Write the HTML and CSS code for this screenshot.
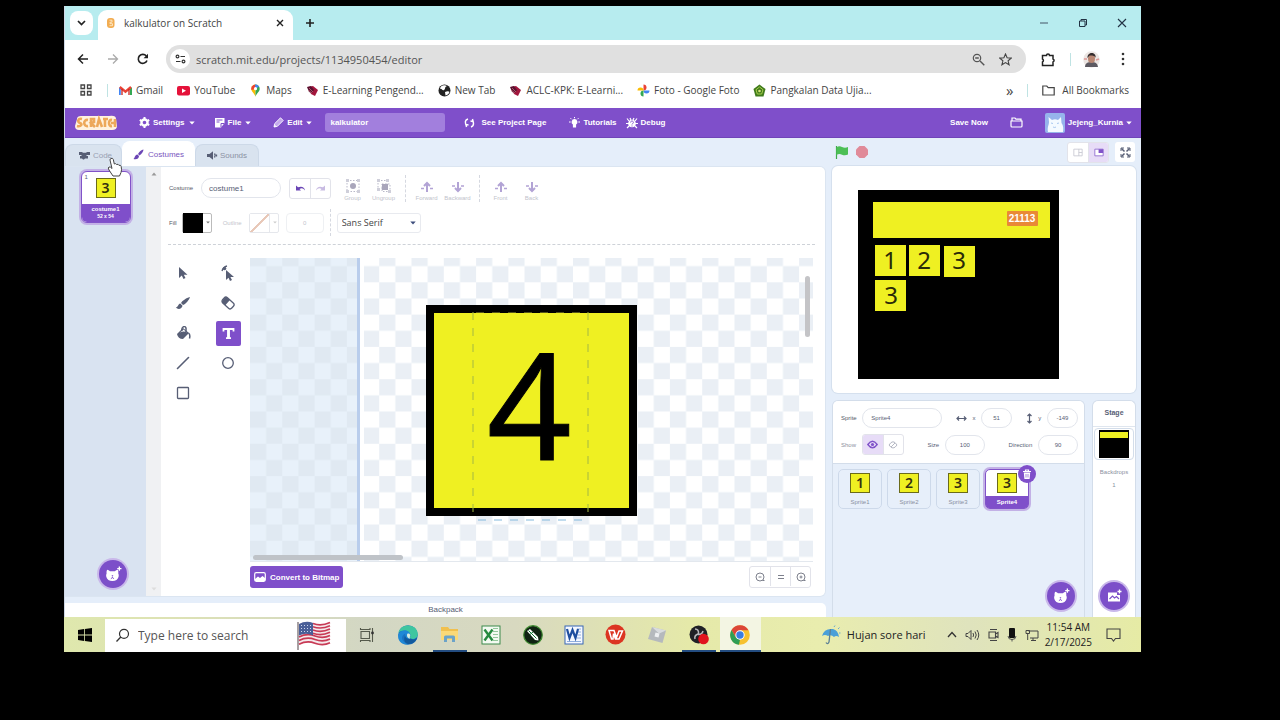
FILE: index.html
```html
<!DOCTYPE html>
<html lang="en">
<head>
<meta charset="utf-8">
<title>kalkulator on Scratch</title>
<link rel="stylesheet" href="styles.css">
</head>
<body>
<svg class="defs" width="0" height="0" aria-hidden="true">
  <symbol id="caret" viewBox="0 0 6 4"><path d="M0.3 0.5h5.4L3 3.6z" fill="currentColor"/></symbol>
  <symbol id="cat" viewBox="0 0 16 16"><path d="M2 3.500c1 0 2 .8 2.700 1.500h4.600C10 4.300 11 3.500 12 3.500c.6 1 .6 2.500.5 3.500.5 1 .6 2 .3 3-.6 2.700-2.800 4-5.800 4s-5.200-1.300-5.800-4c-.3-1-.2-2 .3-3-.1-1-.1-2.500.5-3.500z" fill="#fff"/><path d="M7 8.500l-1 1h2z" fill="#7c4fc9"/><path d="M5.500 12q1.500-.2 1.500-2 0 1.800 1.500 2" fill="none" stroke="#7c4fc9" stroke-width=".7"/><path d="M13.500.5v4M11.500 2.500h4" stroke="#fff" stroke-width="1.300"/></symbol>
  <symbol id="elearn" viewBox="0 0 13 13"><path d="M2 3l5-1 5 4-3 6-4-2z" fill="#a3163d"/><path d="M1 3l4-1 3 4-2 3-3-1z" fill="#5b1030"/><path d="M3 4l4 4M2 6l4 3" stroke="#d8868f" stroke-width=".6"/></symbol>
  <symbol id="up" viewBox="0 0 14 12"><path d="M7 11V2M4 5l3-3 3 3" fill="none" stroke="currentColor" stroke-width="2"/><path d="M1 7.500h3M10 7.500h3" stroke="currentColor" stroke-width="1.300"/></symbol>
  <symbol id="down" viewBox="0 0 14 12"><path d="M7 1v9M4 7l3 3 3-3" fill="none" stroke="currentColor" stroke-width="2"/><path d="M1 5h3M10 5h3" stroke="currentColor" stroke-width="1.300"/></symbol>
</svg>

<div class="window">
  <header class="tabstrip">
    <button class="tab-search" aria-label="Search tabs"><svg width="9" height="6" viewBox="0 0 9 6"><path d="M1 1l3.500 3.500L8 1" fill="none" stroke="#222" stroke-width="1.700"/></svg></button>
    <div class="browser-tab">
      <svg width="10" height="12" viewBox="0 0 10 12"><rect x="1" y="1" width="7.500" height="10" rx="3" fill="#f2ad52"/><path d="M3.500 3.200h2.500v2H4v1.500h2.500v2H3.500" fill="none" stroke="#fff0d8" stroke-width=".8"/></svg>
      <span>kalkulator on Scratch</span>
      <button class="plain" aria-label="Close tab"><svg width="8" height="8" viewBox="0 0 8 8"><path d="M1 1l6 6M7 1L1 7" stroke="#222" stroke-width="1.400"/></svg></button>
    </div>
    <button class="plain newtab" aria-label="New tab"><svg width="10" height="10" viewBox="0 0 10 10"><path d="M5 1v8M1 5h8" stroke="#222" stroke-width="1.600"/></svg></button>
    <div class="win-controls">
      <button class="plain" aria-label="Minimize"><svg width="10" height="10" viewBox="0 0 10 10"><path d="M1 5h8" stroke="#456" stroke-width="1"/></svg></button>
      <button class="plain" aria-label="Restore"><svg width="10" height="10" viewBox="0 0 10 10"><path d="M1.500 3h5.500v5.500H1.500zM3 3V1.500h5.500V7H7" fill="none" stroke="#234" stroke-width="1"/></svg></button>
      <button class="plain" aria-label="Close"><svg width="10" height="10" viewBox="0 0 10 10"><path d="M1 1l8 8M9 1L1 9" stroke="#234" stroke-width="1.100"/></svg></button>
    </div>
  </header>

  <div class="toolbar">
    <button class="plain nav" aria-label="Back"><svg width="12" height="12" viewBox="0 0 12 12"><path d="M11 6H2M6 1.500L1.500 6 6 10.500" fill="none" stroke="#222" stroke-width="1.500"/></svg></button>
    <button class="plain nav" aria-label="Forward"><svg width="12" height="12" viewBox="0 0 12 12"><path d="M1 6h9M6 1.500L10.500 6 6 10.500" fill="none" stroke="#aaa" stroke-width="1.300"/></svg></button>
    <button class="plain nav" aria-label="Reload"><svg width="12" height="12" viewBox="0 0 12 12"><path d="M10 7.500A4.500 4.500 0 1 1 9.300 3" fill="none" stroke="#222" stroke-width="1.600"/><path d="M11 .8v4.400H6.600z" fill="#222"/></svg></button>
    <div class="address">
      <span class="site-info"><svg width="11" height="10" viewBox="0 0 11 10"><g fill="none" stroke="#333" stroke-width="1.200"><circle cx="2.500" cy="2.500" r="1.400"/><path d="M5.500 2.500H10M1 7.500h4.500"/><circle cx="8.500" cy="7.500" r="1.400"/></g></svg></span>
      <input class="url" aria-label="Address" value="scratch.mit.edu/projects/1134950454/editor">
      <svg width="13" height="13" viewBox="0 0 13 13"><circle cx="5" cy="5" r="3.700" fill="none" stroke="#555" stroke-width="1.200"/><path d="M8 8l4.300 4.300M3.200 5h3.600" stroke="#555" stroke-width="1.400"/></svg>
      <svg width="13" height="13" viewBox="0 0 13 13"><path d="M6.500 1l1.600 3.800 4.100.3-3.100 2.700 1 4-3.600-2.200-3.600 2.200 1-4L.8 5.100l4.100-.3z" fill="none" stroke="#444" stroke-width="1.100"/></svg>
    </div>
    <svg class="ext" width="15" height="15" viewBox="0 0 15 15"><path d="M1.500 3.500h4a1.500 1.500 0 0 1 3 0H12v3.500a1.600 1.600 0 0 1 0 3v3.500H1.500V10a1.700 1.700 0 0 0 0-3z" fill="none" stroke="#222" stroke-width="1.500"/></svg>
    <i class="vline"></i>
    <svg class="profile" width="17" height="17" viewBox="0 0 17 17"><circle cx="8.500" cy="8.500" r="8.300" fill="#ece6e3"/><path d="M2 16c0-4 3-5 6.500-5s6 1 6.500 5z" fill="#5d5a62"/><ellipse cx="8.500" cy="7.500" rx="3.500" ry="4.600" fill="#b98773"/><path d="M4.500 7C4 1 13 0 12.800 7 12 4 8 5 6.500 4.500z" fill="#342c2d"/><path d="M1 8h3M13 9l3-1" stroke="#d99" stroke-width="1.500"/></svg>
    <svg class="dots" width="4" height="14" viewBox="0 0 4 14"><circle cx="2" cy="2" r="1.300"/><circle cx="2" cy="7" r="1.300"/><circle cx="2" cy="12" r="1.300"/></svg>
  </div>

  <nav class="bookmarks">
    <svg class="apps" width="12" height="12" viewBox="0 0 12 12"><path d="M1 1h3.500v3.500H1zM7.500 1H11v3.500H7.500zM1 7.500h3.500V11H1zM7.500 7.500H11V11H7.500z" fill="none" stroke="#444" stroke-width="1.300"/></svg>
    <i class="vline"></i>
    <a href="#"><svg width="13" height="13" viewBox="0 0 13 13"><path d="M.8 11V3.500" stroke="#4285f4" stroke-width="2"/><path d="M12 11V3.500" stroke="#34a853" stroke-width="2"/><path d="M.8 3l5.700 4.600L12 3" fill="none" stroke="#ea4335" stroke-width="2.400"/><path d="M3 5v6M10 5v6" stroke="#c5221f" stroke-width="1.300"/></svg>Gmail</a>
    <a href="#"><svg width="13" height="13" viewBox="0 0 13 13"><rect y="2" width="13" height="9.500" rx="2" fill="#e5123a"/><path d="M5 4.500v4.400l4-2.200z" fill="#fff"/></svg>YouTube</a>
    <a href="#"><svg width="13" height="13" viewBox="0 0 13 13"><path d="M6.500 12.800C5.500 9 2.300 8 2.300 4.700A4.200 4.200 0 0 1 6.500.5z" fill="#fbbc04"/><path d="M6.500 12.800c1-3.800 4.200-4.800 4.200-8.100A4.200 4.200 0 0 0 6.500.5z" fill="#34a853"/><path d="M2.500 6A4.200 4.200 0 0 1 6.500.5l1 4z" fill="#ea4335"/><path d="M6 .5a4.200 4.200 0 0 1 4 2L6.500 5z" fill="#4285f4"/><circle cx="6.500" cy="4.700" r="1.600" fill="#fff"/></svg>Maps</a>
    <a href="#"><svg width="13" height="13"><use href="#elearn"/></svg>E-Learning Pengend...</a>
    <a href="#"><svg width="13" height="13" viewBox="0 0 13 13"><circle cx="6.500" cy="6.500" r="6" fill="#222"/><path d="M2 5c2-1 2 2 4 1s0-3 3-4c-3-2-7 0-7 3zM7 8c2-1 4-1 4.500 0-.5 2-2 3-4 3.500z" fill="#fff"/></svg>New Tab</a>
    <a href="#"><svg width="13" height="13"><use href="#elearn"/></svg>ACLC-KPK: E-Learni...</a>
    <a href="#"><svg width="13" height="13" viewBox="0 0 13 13"><path d="M6.500 6.500V.5a3 3 0 0 1 0 6z" fill="#ea4335"/><path d="M6.500 6.500h6a3 3 0 0 1-6 0z" fill="#4285f4"/><path d="M6.500 6.500v6a3 3 0 0 1 0-6z" fill="#34a853"/><path d="M6.500 6.500h-6a3 3 0 0 1 6 0z" fill="#fbbc04"/></svg>Foto - Google Foto</a>
    <a href="#"><svg width="13" height="13" viewBox="0 0 13 13"><path d="M6.500.5l6 4.600-2 7.400h-8l-2-7.400z" fill="#3f7a1c"/><path d="M6.500 3l3.500 2.700-1.300 4.300H4.300L3 5.700z" fill="none" stroke="#a9cf4b"/><circle cx="6.500" cy="7" r="1.300" fill="#d8e27a"/></svg>Pangkalan Data Ujia...</a>
    <span class="more">»</span>
    <i class="vline"></i>
    <a href="#" class="all"><svg width="13" height="11" viewBox="0 0 13 11"><path d="M.8 1h4l1.400 1.600h6V10H.8z" fill="none" stroke="#444" stroke-width="1.200"/></svg>All Bookmarks</a>
  </nav>

  <div class="menubar">
    <svg class="logo" width="44" height="18" viewBox="0 0 44 18"><path d="M3 5q0-3 4-3h28q7-1 7 3l1 7q0 4-5 4H5q-4 0-4-4z" fill="#fff2df"/><g fill="none" stroke="#eda85a" stroke-width="2.600"><path d="M8 5c-4-1-5 3-2 4s1 4-3 3M14 6c-5-1-5 7 0 6M17 13V5h3v3l-3 1 4 4M23 13l2-8 3 8M29 5h5M31 5v8M38 6c-4-1-4 7 0 6M37 9h4"/><path d="M41 5v8"/></g></svg>
    <button class="menu m-settings"><svg width="11" height="11" viewBox="0 0 11 11"><circle cx="5.500" cy="5.500" r="3" fill="none" stroke="#fff" stroke-width="2.400"/><path d="M5.500 0v2M5.500 9v2M.8 2.800l1.600 1M8.600 7.200l1.600 1M.8 8.200l1.600-1M8.600 3.800l1.600-1" stroke="#fff" stroke-width="2"/></svg>Settings<svg class="car" width="6" height="4"><use href="#caret"/></svg></button>
    <button class="menu m-file"><svg width="11" height="11" viewBox="0 0 11 11"><path d="M1 1h9.500v5L7 10.500H1z" fill="#fff"/><path d="M2.500 3h6M2.500 5h3M7 10V6.500h3" stroke="#7d4dcb" stroke-width="1"  fill="none"/></svg>File<svg class="car" width="6" height="4"><use href="#caret"/></svg></button>
    <button class="menu m-edit"><svg width="11" height="11" viewBox="0 0 11 11"><path d="M1 10l.6-3.300L7.500.8l2.700 2.700-5.900 5.900z" fill="#c3a8ec" stroke="#fff" stroke-width=".9"/><path d="M1 10l.6-2.500L3.500 9.400z" fill="#fff"/></svg>Edit<svg class="car" width="6" height="4"><use href="#caret"/></svg></button>
    <input class="title" aria-label="Project title" value="kalkulator">
    <button class="menu m-page"><svg width="11" height="10" viewBox="0 0 11 10"><path d="M4 1C1 2 1 4 2 7M2.500 9l-.5-2.500L4.500 7M7 9c3-1 3-3 2-6M8.500 1l.5 2.500L6.500 3" fill="none" stroke="#fff" stroke-width="1.400"/></svg>See Project Page</button>
    <button class="menu m-tut"><svg width="11" height="12" viewBox="0 0 11 12"><path d="M5.500 2a3 3 0 0 1 1.600 5.500v3H3.900v-3A3 3 0 0 1 5.500 2z" fill="#fff"/><path d="M5.500 0v1.200M0 5h1.700M9.300 5H11M1.500 1.200l1 1M9.500 1.200l-1 1" stroke="#fff"/></svg>Tutorials</button>
    <button class="menu m-debug"><svg width="12" height="12" viewBox="0 0 12 12"><circle cx="6" cy="6.500" r="3.800" fill="#fff"/><path d="M1 1.500l2 2.500M11 1.500L9 4M0 6.500h12M1 11l2-2M11 11L9 9M4 1l1 2M8 1L7 3" stroke="#fff" stroke-width="1.200"/><path d="M4.600 5.500c0-2 2.800-2 2.800 0 0 1-1.400 1-1.400 2M6 8.500v1" fill="none" stroke="#7d4dcb" stroke-width=".9"/></svg>Debug</button>
    <button class="menu m-save">Save Now</button>
    <svg class="folder" width="13" height="11" viewBox="0 0 13 11"><path d="M1 4V9q0 1 1 1h9q1 0 1-1V4zM2 3.500V1h3l1 1.200h5v1.300" fill="none" stroke="#fff" stroke-width="1.200"/></svg>
    <svg class="avatar" width="20" height="20" viewBox="0 0 20 20"><rect width="20" height="20" rx="2" fill="#96b4ec"/><path d="M3 19C2 14 4 12 4 9l-.500-5L7 7q3-1.500 6 0l3-3 .500 6c2 3 2 5 1.500 9z" fill="#f4faff"/><path d="M6 10l2 .5M12 10.500l2-.5M8 14q2 1 3 0" stroke="#a9c8f0" fill="none"/></svg>
    <button class="menu m-user">Jejeng_Kurnia<svg class="car" width="6" height="4"><use href="#caret"/></svg></button>
  </div>

  <main class="editor">
    <section class="left">
      <div class="tabs" role="tablist">
        <button class="etab code" role="tab"><svg width="11" height="9" viewBox="0 0 11 9"><path d="M0 1h3l1 .8h3L8 1h3v3H8l-1 1H3L2 4H0zM1 5h8v2.500H6l-1 1H4l-1-1H1z" fill="#575e75"/></svg>Code</button>
        <button class="etab active" role="tab" aria-selected="true"><svg width="11" height="11" viewBox="0 0 11 11"><path d="M10.500.5c-2 0-4.500 2.500-5.500 4.500L6.500 6.500C8.500 5 10.500 2.500 10.500.5z" fill="#6b45b5"/><path d="M4.500 5.500L6 7c0 2.500-2.500 4-5.500 3C2 9 1.500 6 4.500 5.500z" fill="#6b45b5"/></svg>Costumes</button>
        <button class="etab sounds" role="tab"><svg width="11" height="9" viewBox="0 0 11 9"><path d="M0 3h2.500L6 .3v8.400L2.500 6H0z" fill="#575e75"/><path d="M7.500 2.500q1.500 2 0 4M9.500 3.500v2" fill="none" stroke="#575e75" stroke-width="1.300"/></svg>Sounds</button>
      </div>
      <div class="pane">
        <div class="selector">
          <div class="costume">
            <span class="num">1</span><div class="card-art"><b class="thumb">3</b></div>
            <div class="card-name">costume1<small>52 x 54</small></div>
          </div>
          <button class="round add-costume" aria-label="Choose a costume"><svg width="17" height="17"><use href="#cat"/></svg></button>
        </div>
        <div class="scroll"><svg width="6" height="4" viewBox="0 0 6 4"><path d="M.5 3.500h5L3 .5z" fill="#999"/></svg><i></i><svg width="6" height="4" viewBox="0 0 6 4"><path d="M.5.5h5L3 3.500z" fill="#ddd"/></svg></div>
        <div class="paint">
          <div class="row r1">
            <label for="cname" class="dark">Costume</label>
            <input id="cname" class="pill cname" value="costume1">
            <div class="pair undo"><button aria-label="Undo"><svg width="11" height="8" viewBox="0 0 11 8"><path d="M1 1.500v5h5L4.500 5Q7.500 3 10 6.500 9 1.500 3 3.300z" fill="#6a45b5"/></svg></button><button aria-label="Redo"><svg width="11" height="8" viewBox="0 0 11 8"><path d="M10 1.500v5H5L6.500 5Q3.500 3 1 6.500 2 1.500 8 3.300z" fill="#c8bbe2"/></svg></button></div>
            <button class="act grp"><svg width="16" height="14" viewBox="0 0 16 14"><path d="M2 1.500h12v11H2z" fill="none" stroke="#b9b9c9" stroke-dasharray="1.500 1.500"/><path d="M1 0h3v3H1zM12 0h3v3h-3zM1 11h3v3H1zM12 11h3v3h-3z" fill="#cfcfda"/><circle cx="8" cy="7" r="3" fill="#a9a6bb"/></svg>Group</button>
            <button class="act ungrp"><svg width="16" height="14" viewBox="0 0 16 14"><path d="M2 1.500h9v8H2zM6 5h8v7.500H6z" fill="none" stroke="#b9b9c9" stroke-dasharray="1.500 1.500"/><path d="M1 0h3v3H1zM10 0h3v3h-3zM1 9h3v3H1zM12 11h3v3h-3z" fill="#cfcfda"/><rect x="6" y="5" width="6" height="6" fill="#a9a6bb"/></svg>Ungroup</button>
            <i class="dot wide"></i>
            <button class="act fwd"><svg width="14" height="12"><use href="#up"/></svg>Forward</button>
            <button class="act bwd"><svg width="14" height="12"><use href="#down"/></svg>Backward</button>
            <i class="dot wide"></i>
            <button class="act frt"><svg width="14" height="12"><use href="#up"/></svg>Front</button>
            <button class="act bck"><svg width="14" height="12"><use href="#down"/></svg>Back</button>
          </div>
          <div class="row r2">
            <span class="dark">Fill</span>
            <button class="swatch fill" aria-label="Fill colour"><i></i><svg width="4" height="3"><use href="#caret"/></svg></button>
            <span class="muted outl">Outline</span>
            <button class="swatch none" aria-label="Outline colour"><i></i><svg width="4" height="3"><use href="#caret"/></svg></button>
            <input class="owidth" aria-label="Outline width" value="0">
            <i class="dot"></i>
            <div class="fontbox"><select aria-label="Font"><option>Sans Serif</option></select><svg width="6" height="4"><use href="#caret"/></svg></div>
          </div>
          <div class="work">
            <div class="tools">
              <button aria-label="Select"><svg width="14" height="14" viewBox="0 0 14 14"><path d="M3 1v11l2.800-2.500 1.700 3.600 2-1-1.700-3.400H11.500z" fill="#575e75"/></svg></button>
              <button aria-label="Reshape"><svg width="15" height="17" viewBox="0 0 15 17"><path d="M5 5v10l2.500-2.300 1.500 3.300 2-1-1.600-3H13z" fill="#575e75"/><path d="M1 6Q2 2 6 1" fill="none" stroke="#575e75" stroke-width="1.300"/><circle cx="3.500" cy="3.500" r="1.800" fill="#575e75"/></svg></button>
              <button aria-label="Brush"><svg width="16" height="14" viewBox="0 0 16 14"><path d="M15 1C11 2 7 5 6 7l2 2c3-1 6-5 7-8z" fill="#575e75"/><path d="M5.300 7.500l2.200 2.200C7 13 3 14 .8 11.500 3 11.500 3 8 5.300 7.500z" fill="#575e75"/></svg></button>
              <button aria-label="Eraser"><svg width="14" height="14" viewBox="0 0 14 14"><g transform="rotate(42 7 7)"><rect x=".8" y="3.500" width="12.400" height="7" rx="2.300" fill="#fff" stroke="#575e75" stroke-width="1.300"/><path d="M2.500 3.500h4v7h-4q-1.500 0-1.500-3.500t1.500-3.500z" fill="#575e75"/></g></svg></button>
              <button aria-label="Fill"><svg width="15" height="14" viewBox="0 0 15 14"><path d="M1 8l6-6 6 5-6 6Q2 13 1 8z" fill="#575e75"/><path d="M4 6.500q4-2 7 0L7.500 3.500z" fill="#fff"/><path d="M6 5c-1-4 3-6 4-3v4M12.500 7c1.500 1 1.500 3.500 1 5.500" fill="none" stroke="#575e75" stroke-width="1.500"/></svg></button>
              <button class="on" aria-label="Text" aria-pressed="true"><svg width="15" height="15" viewBox="0 0 15 15"><path d="M2.500 5.500V3h10v2.500M7.500 3v9.200M5 12.200h5" fill="none" stroke="#fff" stroke-width="1.800"/><path d="M7.500 3v9" stroke="#fff" stroke-width="2.800"/></svg></button>
              <button aria-label="Line"><svg width="14" height="14" viewBox="0 0 14 14"><path d="M1.500 12.500l11-11" stroke="#575e75" stroke-width="1.600" stroke-linecap="round"/></svg></button>
              <button aria-label="Circle"><svg width="14" height="14" viewBox="0 0 14 14"><circle cx="7" cy="7" r="5.300" fill="none" stroke="#575e75" stroke-width="1.300"/></svg></button>
              <button aria-label="Rectangle"><svg width="14" height="14" viewBox="0 0 14 14"><rect x="1.500" y="1.500" width="11" height="11" rx=".8" fill="none" stroke="#575e75" stroke-width="1.300"/></svg></button>
            </div>
            <div class="canvas-col">
              <svg class="canvas" viewBox="0 0 563 303" preserveAspectRatio="xMinYMin slice">
                <defs>
                  <pattern id="chk" x="0" y="-8" width="32.300" height="32.300" patternUnits="userSpaceOnUse"><path d="M0 0h16.150v16.150H0zM16.150 16.150H32.300V32.300H16.150z" fill="#eaeff5"/></pattern>
                  <pattern id="chk2" x="0" y="-8" width="32.300" height="32.300" patternUnits="userSpaceOnUse"><path d="M0 0h16.150v16.150H0zM16.150 16.150H32.300V32.300H16.150z" fill="#e0e9f2"/></pattern>
                </defs>
                <rect width="563" height="303" fill="#fff"/>
                <rect x="114" width="449" height="303" fill="url(#chk)"/>
                <rect width="108" height="303" fill="#e8f1fa"/>
                <rect width="108" height="303" fill="url(#chk2)"/>
                <rect x="107" width="3" height="303" fill="#b9cdec"/>
                <rect x="180" y="51" width="203" height="203" fill="#eff022" stroke="#000" stroke-width="8"/>
                <text x="237" y="202" class="big">4</text>
                <path d="M223 54V262M338 54V262" stroke="#a3b845" stroke-width="1" stroke-dasharray="8 8" fill="none"/>
                <path d="M226 54.500H337" stroke="#55551c" stroke-width="1" stroke-dasharray="8 8"/>
                <path d="M228 262H337" stroke="#83b9dd" stroke-width="1" stroke-dasharray="8 8"/>
                <rect x="555" y="18" width="5" height="61" rx="2.500" fill="#c4c4c7"/>
                <rect x="3" y="297" width="150" height="5" rx="2.500" fill="#bfc3c8"/>
              </svg>
              <div class="canvas-foot">
                <button class="convert"><svg width="12" height="10" viewBox="0 0 12 10"><rect x=".7" y=".7" width="10.600" height="8.600" rx="1.500" fill="none" stroke="#fff" stroke-width="1.200"/><path d="M1 7l3-2.500 2 1.500 2.500-2L11 6v3H1z" fill="#fff"/></svg>Convert to Bitmap</button>
                <div class="pair zoomers">
                  <button aria-label="Zoom out"><svg width="12" height="12" viewBox="0 0 12 12"><circle cx="6" cy="6" r="4" fill="none" stroke="#7d808c"/><path d="M8.500 9.500H10.500M4.500 6h3" stroke="#7d808c"/></svg></button>
                  <button aria-label="Zoom reset"><svg width="8" height="8" viewBox="0 0 8 8"><path d="M1 2.500h6M1 5.500h6" stroke="#7d808c"/></svg></button>
                  <button aria-label="Zoom in"><svg width="12" height="12" viewBox="0 0 12 12"><circle cx="6" cy="6" r="4" fill="none" stroke="#7d808c"/><path d="M8.500 9.500H10.500M4.500 6h3M6 4.500v3" stroke="#7d808c"/></svg></button>
                </div>
              </div>
            </div>
          </div>
        </div>
      </div>
      <div class="backpack">Backpack</div>
    </section>

    <section class="right">
      <div class="stage-head">
        <button class="plain" aria-label="Go"><svg width="14" height="14" viewBox="0 0 14 14"><path d="M1.500 1v13" stroke="#3fa94a" stroke-width="1.200"/><path d="M1.500 2.500Q4 .5 7 2t6 0v7.500q-3 1.500-6 .2t-5.500.3z" fill="#4cbf56"/></svg></button>
        <button class="plain" aria-label="Stop"><svg width="14" height="14" viewBox="0 0 14 14"><path d="M4.500 1h5L13 4.500v5L9.500 13h-5L1 9.500v-5z" fill="#e08a99"/></svg></button>
        <div class="pair sizes"><button aria-label="Small stage"><svg width="10" height="9" viewBox="0 0 12 10"><path d="M1 1h10v8H1zM7 1v8M7 5h4" fill="none" stroke="#c5c7d0"/></svg></button><button class="sel" aria-label="Large stage"><svg width="10" height="9" viewBox="0 0 12 10"><path d="M1 1h10v8H1z" fill="#fff" stroke="#8a65cc"/><path d="M5.500 1H11v4.500H5.500z" fill="#8153c9"/></svg></button></div>
        <button class="full" aria-label="Full screen"><svg width="11" height="11" viewBox="0 0 11 11"><path d="M1 4V1h3M7 1h3v3M10 7v3H7M4 10H1V7" fill="none" stroke="#575e75" stroke-width="1"/><path d="M1.500 1.500l3 3M9.500 1.500l-3 3M9.500 9.500l-3-3M1.500 9.500l3-3" fill="none" stroke="#575e75" stroke-width="1.500"/></svg></button>
      </div>
      <svg class="stage" viewBox="0 0 304 227" preserveAspectRatio="xMinYMin meet">
        <rect x="26" y="24" width="201" height="189"/>
        <g fill="#eff022"><rect x="41" y="36" width="177" height="36"/><rect x="43" y="79" width="31" height="31"/><rect x="77" y="79" width="31" height="31"/><rect x="112" y="80" width="31" height="31"/><rect x="43" y="114" width="31" height="31"/></g>
        <rect x="175" y="45" width="31" height="15" rx="1" fill="#e98936"/>
        <text x="190" y="56" class="monitor">21113</text>
        <g class="dig"><text x="58" y="103">1</text><text x="92" y="103">2</text><text x="127" y="103">3</text><text x="59" y="138">3</text></g>
      </svg>
      <div class="lower">
        <div class="sprites">
          <div class="info">
            <div class="irow">
              <label for="sname" class="dark">Sprite</label><input id="sname" class="pill sname" value="Sprite4">
              <svg class="ax" width="11" height="7" viewBox="0 0 11 7"><path d="M1 3.500h9M3 1.500L1 3.500l2 2M8 1.500l2 2-2 2" fill="none" stroke="#575e75" stroke-width="1.200"/></svg>
              <label for="px">x</label><input id="px" class="pill num30" value="51">
              <svg class="ay" width="7" height="11" viewBox="0 0 7 11"><path d="M3.500 1v9M1.500 3l2-2 2 2M1.500 8l2 2 2-2" fill="none" stroke="#575e75" stroke-width="1.200"/></svg>
              <label for="py">y</label><input id="py" class="pill num30" value="-149">
            </div>
            <div class="irow">
              <span class="muted2">Show</span>
              <div class="pair show"><button class="sel" aria-label="Show"><svg width="11" height="9" viewBox="0 0 11 9"><path d="M.8 4.500Q5.500-2 10.200 4.500 5.500 11 .8 4.500z" fill="none" stroke="#8153c9" stroke-width="1.300"/><circle cx="5.500" cy="4.500" r="1.600" fill="#8153c9"/></svg></button><button aria-label="Hide"><svg width="10" height="10" viewBox="0 0 10 10"><path d="M1 5Q5-1.500 9 5 5 11 1 5zM7 3L3 7" fill="none" stroke="#b5b8c4"/></svg></button></div>
              <label for="sz" class="l-size">Size</label><input id="sz" class="pill num40" value="100">
              <label for="dr" class="l-dir">Direction</label><input id="dr" class="pill num40" value="90">
            </div>
          </div>
          <div class="tiles">
            <div class="tile"><b class="thumb">1</b><span>Sprite1</span></div>
            <div class="tile"><b class="thumb">2</b><span>Sprite2</span></div>
            <div class="tile"><b class="thumb">3</b><span>Sprite3</span></div>
            <div class="tile chosen"><b class="thumb">3</b><span>Sprite4</span>
              <button class="trash" aria-label="Delete"><svg width="10" height="11" viewBox="0 0 10 11"><path d="M1 2.500h8M3.500 2V1h3v1" stroke="#fff" stroke-width="1.200" fill="none"/><path d="M1.800 3.500h6.400L7.600 10H2.400z" fill="#fff"/><path d="M4 5v3.500M6 5v3.500" stroke="#8153c9" stroke-width=".7"/></svg></button>
            </div>
          </div>
          <button class="round add-sprite" aria-label="Choose a sprite"><svg width="17" height="17"><use href="#cat"/></svg></button>
        </div>
        <div class="stage-sel">
          <div class="sh">Stage</div>
          <div class="bd"><i></i></div>
          <div class="bl">Backdrops</div><div class="bl">1</div>
          <button class="round add-bd" aria-label="Choose a backdrop"><svg width="16" height="16" viewBox="0 0 16 16"><path d="M2 4.500h9V7h3v6.500H2z" fill="#fff"/><path d="M3.500 11l3-3 2 2 2-1.500L13 11" fill="none" stroke="#7c4fc9" stroke-width="1.200"/><path d="M13.500 1.500v4M11.500 3.500h4" stroke="#fff" stroke-width="1.300"/></svg></button>
        </div>
      </div>
    </section>
  </main>

  <footer class="taskbar">
    <button class="start" aria-label="Start"><svg width="14" height="14" viewBox="0 0 14 14"><path d="M0 2l6-.9v5.500H0zM6.800 1L14 0v6.600H6.800zM0 7.400h6v5.500L0 12zM6.800 7.400H14V14l-7.200-1z"/></svg></button>
    <div class="search">
      <svg width="15" height="15" viewBox="0 0 15 15"><circle cx="9" cy="5.800" r="4.500" fill="none" stroke="#333" stroke-width="1.200"/><path d="M5.800 9L1.500 13.500" stroke="#333" stroke-width="1.300"/></svg>
      <input aria-label="Search" placeholder="Type here to search">
      <svg width="35" height="30" viewBox="0 0 35 30"><path d="M2 2v28" stroke="#8a8085" stroke-width="1.500"/><path d="M3 4Q10 0 18 3t16-1v21q-8 4-16 1T3 25z" fill="#f5e9ec"/><g fill="none" stroke="#c83a55" stroke-width="1.700"><path d="M17 3.500q8 3 17-1M17 6.700q8 3 17-1M17 10q8 3 17-1M17 13.300q8 3 17-1"/><path d="M3 17q8-4 16-1t15-.5M3 20.500q8-4 16-1t15-.5M3 24.200q8-4 16-1t15-.5"/></g><path d="M3 4Q10 0 17 3v12.500Q10 12 3 15.500z" fill="#4a5f98"/><path d="M5 5.500h11M5 8.500h11M5 11.500h11" stroke="#cdd6ee" stroke-width="1" stroke-dasharray="1 2"/></svg>
    </div>
    <div class="apps-row">
      <button aria-label="Task View"><svg width="16" height="16" viewBox="0 0 16 16"><path d="M2 4.500h8.500v7H2zM1.500 1v1.500H11V1M1.500 15v-1.500H11V15M13.500 1v14" fill="none" stroke="#555a4c" stroke-width="1.100"/><circle cx="13.500" cy="6" r="1.400" fill="#333"/></svg></button>
      <button aria-label="Edge"><svg width="20" height="20" viewBox="0 0 20 20"><circle cx="10" cy="10" r="9.800" fill="#1a73c2"/><path d="M.5 8C2-2 19-2 19.800 9c0 4-4 6-7.500 4.500-1-.5 0-1.500 0-3C12 5 4 4 .5 8z" fill="#3ec6a0"/><path d="M.5 9C4 3 13 5 12.300 11c-.3 1-1 1.500 0 2.500-4 1-6-2-5-5-6 3-3 9 3 11C3 20-1 15 .5 9z" fill="#2088d6"/><path d="M12 13.600c3 1.600 6 .5 7.200-1-1 4-5 7-9 6.400-4-1-5-5-3-8.500 0 2 2 4 4.800 3.100z" fill="#125a9e"/><path d="M9 10c0-2 3-2 3.300.5-.3 1-1 2 0 3C9.500 13.500 9 11.500 9 10z" fill="#d7ecdf"/></svg></button>
      <button class="run" aria-label="File Explorer"><svg width="19" height="17" viewBox="0 0 19 17"><path d="M1 1h7l1.500 2H18v11H1z" fill="#f1c04e"/><path d="M1 5h17v9H1z" fill="#fbd977"/><path d="M4 16v-5q0-1.500 1.500-1.500h8Q15 9.500 15 11v5h-3v-3.500H7V16z" fill="#6ba3c9"/></svg></button>
      <button aria-label="Excel"><svg width="20" height="20" viewBox="0 0 20 20"><rect x="1" y="1" width="18" height="18" fill="#f4faf2" stroke="#3c8a4c"/><path d="M12 3.500h5M12 6.500h5M12 9.500h5M12 12.500h5M12 15.500h5" stroke="#93c79b"/><path d="M3.500 4.500l8 11M11.500 4.500l-8 11" stroke="#258a3f" stroke-width="2.400"/></svg></button>
      <button aria-label="CorelDRAW"><svg width="20" height="20" viewBox="0 0 20 20"><circle cx="10" cy="10" r="9.300" fill="#102313" stroke="#418c33" stroke-width="1.200"/><path d="M4 6l3-2 8 8 .5 3.500L12 15z" fill="#fff"/><path d="M5.500 5.500l8 8M7 9.500l3-2.500" stroke="#173"/></svg></button>
      <button aria-label="Word"><svg width="20" height="20" viewBox="0 0 20 20"><rect x="1" y="1" width="18" height="18" fill="#f5f8ff" stroke="#3867b5"/><path d="M13 4h4M14 7h3M14 10h3M13 13h4M3 16.500h14" stroke="#90aede"/><path d="M3 4l2.500 9L8.500 5l3 8L14 4" fill="none" stroke="#1e4e9f" stroke-width="2.200"/></svg></button>
      <button aria-label="WPS Office"><svg width="21" height="21" viewBox="0 0 21 21"><circle cx="10.500" cy="10.500" r="10" fill="#dc3522"/><path d="M4 6.500h5l2.500 7L14 7h3.500L14 15h-3.500L8.500 9.500 8 15H6.500z" fill="none" stroke="#fff" stroke-width="1.500"/></svg></button>
      <button aria-label="Roblox"><svg width="20" height="18" viewBox="0 0 20 18"><path d="M5 1l14 3.500-3.500 12.500L1 13z" fill="#b5b9bd"/><path d="M5 1l14 3.500-7 3z" fill="#d9dcdf"/><path d="M8.500 6.500l4 1-1 4-4-1z" fill="#eef0f2"/></svg></button>
      <button class="run" aria-label="OBS Studio"><svg width="20" height="20" viewBox="0 0 20 20"><circle cx="9.500" cy="9.500" r="9" fill="#202126"/><path d="M6 4q4 0 3.500 5M14 6q-1 4-5 3.500M6 14q-1-3.500 3-5" fill="none" stroke="#b8b8bd" stroke-width="1.500"/><circle cx="14.500" cy="14" r="5.300" fill="#e0121d"/></svg></button>
      <button class="run open" aria-label="Chrome"><svg width="20" height="20" viewBox="0 0 20 20"><circle cx="10" cy="10" r="9.800" fill="#f6c12f"/><path d="M1.500 5A9.800 9.800 0 0 1 18.500 5.300H10L6 12.500z" fill="#dc4638"/><path d="M1.500 5l4.400 7.600L10 14.800l-1 5A9.800 9.800 0 0 1 1.500 5z" fill="#2f9e55"/><circle cx="10" cy="10" r="4.700" fill="#fff"/><circle cx="10" cy="10" r="3.700" fill="#3b7de0"/></svg></button>
    </div>
    <div class="weather"><svg width="20" height="20" viewBox="0 0 20 20"><path d="M1 11Q3 3 12 4q5 1 6 8-3-2-5 0-3-3-6-1-3-2-6 0z" fill="#4a9fd8"/><path d="M9.500 4L8 17q-1.500 3-3 .5" fill="none" stroke="#5b7f95" stroke-width="1.300"/><path d="M13 2l1-1.500M17 4l1.500-1.500M18 8h1.500" stroke="#6aa7d0"/></svg>Hujan sore hari</div>
    <div class="tray">
      <svg width="10" height="7" viewBox="0 0 10 7"><path d="M1 6l4-4.500L9 6" fill="none" stroke="#333" stroke-width="1.300"/></svg>
      <svg width="15" height="12" viewBox="0 0 15 12"><path d="M1 4.500h2L6 1.500v9L3 7.500H1zM8 4q1.200 2 0 4M10 2.500q2.500 3.500 0 7M12 1q3.500 5 0 10" fill="none" stroke="#444"/></svg>
      <svg width="11" height="14" viewBox="0 0 11 14"><path d="M1 4h6.500v6H1zM7.500 6l2.500-1.500v5L7.500 8M2 1.500h7M2 12.500h7" fill="none" stroke="#444" stroke-width="1.100"/></svg>
      <svg width="10" height="14" viewBox="0 0 10 14"><rect x="2" y="0" width="6" height="10" rx="1" fill="#111"/><path d="M1 8q0 3.500 4 3.500T9 8M5 11v2.500" fill="none" stroke="#555"/></svg>
      <svg width="14" height="12" viewBox="0 0 14 12"><path d="M3.500 2H13v7H5M8 9v2.500M6 11.500h5M1 1.500h3.500v3H1zM2.700 4.500V11" fill="none" stroke="#444"/></svg>
    </div>
    <div class="clock"><span>11:54 AM</span><span>2/17/2025</span></div>
    <svg class="notif" width="15" height="14" viewBox="0 0 15 14"><path d="M1 1h13v9.500H9.500L7.500 13l-2-2.500H1z" fill="none" stroke="#444" stroke-width="1.100"/></svg>
  </footer>

  <svg class="cursor" width="16" height="20" viewBox="0 0 16 20"><path d="M4 1.500q1.800-.8 2.300 1L7.300 7q1.500-1 2.300.5 1.700-.8 2.300.8 1.800-.5 2.300 1.200.8 3.500-.2 6L12.500 19H6L2 13Q.5 10.500 2 10t3 1.500L3 3q-.1-1.200 1-1.500z" fill="#fff" stroke="#444" stroke-width="1"/></svg>
</div>
</body>
</html>
```
FILE: styles.css
```css
* { box-sizing: border-box; }
body {
  margin: 0;
  min-height: 100vh;
  display: flex;
  padding: 6px 139px 68px 64px;
  background: #000;
  font-family: "Open Sans", "Noto Sans", sans-serif;
  font-size: 10px;
  color: #444;
}
svg { display: block; flex: none; }
.defs { position: absolute; }
button, input, select { font: inherit; color: inherit; border: 0; padding: 0; margin: 0; background: none; min-width: 0; }
button { display: flex; align-items: center; justify-content: center; }
a { color: inherit; text-decoration: none; }
.window { position: relative; flex: 1; min-width: 0; display: flex; flex-direction: column; background: #fff; border-left: 1px solid #cfd8e6; }
.vline { width: 1px; height: 13px; background: #bfe3e3; }

/* browser tab strip */
.tabstrip { display: flex; align-items: flex-start; height: 34px; padding: 4px 14px 0 5px; background: #b7ecef; }
.tab-search { width: 23px; height: 24px; border-radius: 8px; background: #fff; margin-top: 1px; }
.browser-tab { display: flex; align-items: center; width: 195px; height: 30px; margin-left: 5px; padding: 0 9px 4px 8px; border-radius: 9px 9px 0 0; background: #fff; }
.browser-tab span { flex: 1; margin-left: 8px; }
.newtab { margin: 8px 0 0 12px; }
.win-controls { display: flex; gap: 29px; margin: 8px 0 0 auto; }

/* toolbar */
.toolbar { display: flex; align-items: center; height: 36px; padding: 2px 16px 0 12px; background: #fff; }
.nav { margin-right: 18px; }
.address { flex: 1; display: flex; align-items: center; gap: 14px; height: 28px; margin-left: -1px; padding: 0 14px 0 4px; border-radius: 14px; background: #e0e0e0; }
.site-info { display: grid; place-items: center; width: 20px; height: 20px; border-radius: 50%; background: #fff; margin-right: -8px; }
.url { flex: 1; font-size: 11px; color: #555; }
.ext { margin: 0 14px 0 15px; }
.profile { margin: 0 21px 0 12px; }
.dots { fill: #333; }

/* bookmarks */
.bookmarks { display: flex; align-items: center; gap: 14px; height: 32px; padding: 0 12px 4px 15px; white-space: nowrap; }
.bookmarks a { display: flex; align-items: center; gap: 4px; }
.bookmarks .apps + .vline { margin: 0 -3px 0 1px; }
.more { margin-left: auto; font-size: 15px; }
.bookmarks .all { gap: 7px; }

/* project menu bar */
.menubar { display: flex; align-items: center; height: 30px; padding: 0 9px 0 9px; background: #7f4fca; color: #fff; font-family: "Liberation Sans", Arial, sans-serif; font-size: 8px; font-weight: bold; border-bottom: 1px solid #7044b8; }
.menu { gap: 3px; white-space: nowrap; }
.menu .car { margin-left: 1px; }
.m-settings { margin-left: 21px; }
.m-file { margin-left: 19px; }
.m-edit { margin-left: 22px; }
.title { width: 120px; height: 19px; margin-left: 13px; padding: 0 5px; border-radius: 3px; background: #a27fdd; }
.m-page { margin-left: 19px; gap: 6px; }
.m-tut { margin-left: 23px; gap: 3px; }
.m-debug { margin-left: 9px; gap: 3px; }
.m-save { margin-left: auto; }
.folder { margin: 0 22px 0 22px; }
.avatar { margin-right: 3px; }
.m-user { gap: 2px; }

/* editor */
.editor { flex: 1; display: grid; grid-template-columns: minmax(0, 1fr) 304px; gap: 6px; padding-right: 5px; background: #e5eefa; font-family: "Liberation Sans", Arial, sans-serif; font-size: 6px; color: #575e75; }
.left, .right { display: flex; flex-direction: column; min-width: 0; }
.tabs { display: flex; align-items: flex-end; height: 28px; font-size: 8px; }
.etab { height: 22px; gap: 4px; border-radius: 8px 8px 0 0; background: #d9e3ef; border: 1px solid #cdd9e8; border-bottom: 0; color: #8b91a3; }
.etab.code { width: 57px; padding-left: 4px; gap: 3px; color: #9aa1b3; }
.etab.active { width: 73px; height: 25px; background: #fff; color: #7a56c0; border-color: #fff; }
.etab.sounds { width: 64px; gap: 2px; }
.pane { flex: 1; display: flex; background: #fff; border: 1px solid #dbe5f1; border-left: 0; border-radius: 0 6px 6px 0; overflow: hidden; }
.selector { width: 81px; display: flex; flex-direction: column; align-items: center; padding: 4px 0 8px; background: #d9e3f1; }
.costume { position: relative; width: 50px; border: 1px solid #8153c9; border-radius: 6px; overflow: hidden; background: #fff; box-shadow: 0 0 0 2px #c3b1e6; text-align: center; }
.costume .num { position: absolute; left: 3px; top: 2px; }
.card-art { display: grid; place-items: center; height: 32px; }
.thumb { display: grid; place-items: center; width: 20px; height: 20px; border: 1px solid #6b6b1a; background: #eff022; color: #332f10; font: 600 14px/18px "Noto Sans", "Open Sans", sans-serif; }
.card-name { padding: 2px 0; background: #7f4fca; color: #fff; font-weight: bold; line-height: 7px; }
.card-name small { display: block; font-size: 5px; }
.round { width: 28px; height: 28px; border-radius: 50%; background: #7c4fc9; box-shadow: 0 0 0 2px #c9b8ea; }
.add-costume { margin: auto 0 0 15px; }
.scroll { width: 15px; display: flex; flex-direction: column; align-items: center; padding: 5px 0; background: #f0f1f3; }
.scroll i { flex: 1; }
.paint { flex: 1; min-width: 0; display: flex; flex-direction: column; padding: 4px 12px 8px 0; }
.row { display: flex; align-items: center; height: 34px; padding-left: 8px; margin-right: -2px; }
.dark { color: #555a68; }
.muted { color: #c3c5cd; }
.muted2 { color: #8d91a0; }
.pill { height: 20px; border: 1px solid #e2e5ec; border-radius: 10px; background: #fff; color: #575e75; }
.cname { width: 80px; margin-left: 8px; padding: 0 7px; font-size: 8px; }
.pair { display: flex; border: 1px solid #e2e3ea; border-radius: 3px; overflow: hidden; background: #fff; }
.pair button { width: 20px; height: 19px; }
.pair button + button { border-left: 1px solid #e2e3ea; }
.pair .sel { background: #e7dcf7; }
.undo { margin: 0 6px 0 8px; }
.act { flex-direction: column; width: 31px; height: 26px; justify-content: flex-end; gap: 2px; color: #c1c3cc; }
.act svg { color: #b2a3d5; }
.dot { width: 1px; height: 27px; border-left: 1px dashed #d5d8e0; margin: 0 4px; }
.wide { margin: 0 5px 0 6px; }
.r2 { height: 40px; padding-bottom: 4px; border-bottom: 1px dashed #ced2d8; margin-left: 7px; padding-left: 1px; }
.swatch { width: 30px; height: 20px; border: 1px solid #bbb; border-radius: 2px; color: #777; justify-content: flex-start; gap: 3px; }
.swatch i { width: 20px; height: 20px; background: #000; flex: none; }
.fill { margin-left: 5px; }
.outl { margin: 0 7px 0 11px; }
.none { border-color: #e5e7ec; color: #ccc; }
.none i { height: 18px; background: linear-gradient(135deg, #fff 46%, #e8c8b8 47%, #e8c8b8 54%, #fff 55%); border-right: 1px solid #e5e7ec; }
.owidth { width: 38px; height: 20px; margin: 0 2px 0 7px; border: 1px solid #eef0f3; border-radius: 4px; text-align: center; color: #c3c5cd; }
.fontbox { display: flex; align-items: center; width: 84px; height: 20px; margin-left: 2px; padding: 0 4px 0 4px; border: 1px solid #e8eaef; border-radius: 3px; color: #3d4d7c; }
.fontbox select { appearance: none; flex: 1; font: 9px "Open Sans", sans-serif; color: #444; }
.work { flex: 1; display: flex; padding-top: 13px; }
.tools { display: grid; grid-template-columns: 44px 44px; grid-auto-rows: 30px; gap: 0 1px; place-items: center; align-content: start; }
.tools button { width: 25px; height: 25px; }
.tools .on { background: #7f4fca; border-radius: 2px; }
.canvas-col { flex: 1; min-width: 0; display: flex; flex-direction: column; justify-content: space-between; }
.canvas { width: 100%; border-bottom: 1px solid #e3e8ee; }
.big { font: 148px "Noto Sans", "Open Sans", sans-serif; stroke: #000; stroke-width: 1px; }
.canvas-foot { display: flex; justify-content: space-between; padding-right: 2px; }
.convert { height: 22px; padding: 0 4px; gap: 4px; border-radius: 3px; background: #7f4fca; color: #fff; font-size: 8px; font-weight: bold; }
.backpack { height: 14px; margin-top: 6px; background: #fff; border-radius: 0 5px 0 0; text-align: center; font-size: 8px; line-height: 14px; }

/* stage */
.stage-head { display: flex; align-items: center; gap: 6px; height: 28px; padding: 0 1px 0 3px; }
.sizes { margin-left: auto; }
.full { width: 20px; height: 20px; background: #fff; border-radius: 3px; }
.stage { width: 100%; background: #fff; border-radius: 6px; box-shadow: 0 0 0 1px #d5e0ee; }
.monitor { font: bold 10px "Liberation Sans", Arial, sans-serif; fill: #fff; text-anchor: middle; }
.dig { font: 24px "Noto Sans", "Open Sans", sans-serif; fill: #2a2a08; text-anchor: middle; }
.lower { flex: 1; display: grid; grid-template-columns: minmax(0, 1fr) 44px; gap: 7px; margin-top: 7px; }
.sprites { display: flex; flex-direction: column; border: 1px solid #d3ddea; border-bottom: 0; border-radius: 6px 6px 0 0; overflow: hidden; background: #e7effa; }
.info { height: 63px; padding: 4px 6px 5px 8px; display: flex; flex-direction: column; justify-content: space-between; background: #fff; border-bottom: 1px solid #d3ddea; }
.irow { display: flex; align-items: center; height: 27px; justify-content: space-between; }
.sname { width: 80px; padding: 0 8px; }
.num30 { width: 31px; text-align: center; }
.num40 { width: 40px; text-align: center; }
.ax, .ay { margin-left: 8px; }
.l-size, .l-dir { margin-left: 18px; }
.tiles { display: flex; gap: 5px; padding: 5px; }
.tile { position: relative; display: flex; flex-direction: column; align-items: center; justify-content: space-between; width: 44px; height: 40px; padding-top: 3px; border: 1px solid #cdd9ea; border-radius: 5px; color: #8a90a0; }
.tile span { line-height: 12px; }
.chosen { background: #fff; border-color: #8153c9; box-shadow: 0 0 0 2px #c3b1e6; }
.chosen span { align-self: stretch; text-align: center; background: #7f4fca; color: #fff; font-weight: bold; border-radius: 0 0 3px 3px; }
.trash { position: absolute; right: -8px; top: -5px; width: 18px; height: 18px; border-radius: 50%; background: #7f4fca; }
.add-sprite { margin: auto 9px 7px auto; }
.stage-sel { display: flex; flex-direction: column; align-items: center; background: #fff; border: 1px solid #d3ddea; border-bottom: 0; border-radius: 6px 6px 0 0; }
.sh { align-self: stretch; height: 26px; line-height: 23px; text-align: center; font-size: 7px; font-weight: bold; border-bottom: 1px solid #dfe6ef; }
.bd { width: 40px; height: 32px; margin: 1px 0 6px; padding: 1px 4px; border: 1px solid #d3ddea; border-radius: 4px; }
.bd i { display: block; height: 28px; border: 1px solid #000; border-top-width: 2px; background: linear-gradient(#eff022 6px, #000 6px); }
.bl { line-height: 13px; color: #8a90a0; }
.add-bd { margin: auto 0 7px; }

/* taskbar */
.taskbar { display: flex; align-items: center; height: 35px; margin-left: -1px; background: linear-gradient(90deg, #dfe8ad 0, #dde2b4 10%, #d3d7c4 28%, #d8d9c0 42%, #e5e9a9 58%, #e9edae 70%, #dfe3bd 84%, #e6eba5 100%); color: #222; white-space: nowrap; }
.start { width: 41px; height: 35px; }
.search { display: flex; align-items: center; width: 241px; height: 33px; padding: 0 15px 0 10px; background: #fff; margin-top: 1px; }
.search input { flex: 1; margin-left: 8px; font-size: 12px; }
.search input::placeholder { color: #555; opacity: 1; }
.apps-row { display: flex; width: 415px; align-self: stretch; }
.apps-row button { flex: 1; position: relative; }
.run::after { content: ""; position: absolute; left: 4px; right: 4px; bottom: 0; height: 2px; background: #234c80; }
.open { background: #f3f5e3; }
.open::after { left: 0; right: 0; }
.weather { display: flex; align-items: center; gap: 6px; margin-left: auto; font-size: 11px; }
.tray { display: flex; align-items: center; gap: 8px; margin-left: 21px; }
.clock { display: flex; flex-direction: column; align-items: center; line-height: 15px; margin-left: 6px; font-size: 10px; }
.notif { margin: 0 20px 0 14px; }
.cursor { position: absolute; left: 42px; top: 151px; }
```
